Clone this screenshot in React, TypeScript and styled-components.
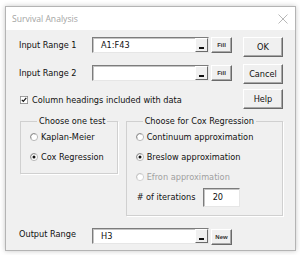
import React from "react";
import styled, { createGlobalStyle } from "styled-components";

const Global = createGlobalStyle`
  html, body { margin: 0; padding: 0; background: #ffffff; }
  #root { width: 300px; height: 255px; overflow: hidden; }
`;

const FONT = `"DejaVu Sans", "Liberation Sans", sans-serif`;

const Dialog = styled.div`
  margin: 6px 0 0 5px;
  width: 291px;
  height: 245px;
  box-sizing: border-box;
  border: 1px solid #b4b4b4;
  box-shadow: 0 0 5px rgba(0, 0, 0, 0.22);
  display: flex;
  flex-direction: column;
  background: #f0f0f0;
  font-family: ${FONT};
  font-size: 8.2px;
  color: #111;
`;

const TitleBar = styled.div`
  height: 23px;
  background: #ffffff;
  display: flex;
  align-items: center;
  justify-content: space-between;
  padding: 0 7px 0 6px;
  flex-shrink: 0;
`;

const Title = styled.span`
  font-family: "Open Sans", "Noto Sans", sans-serif;
  font-size: 8.6px;
  color: #a3a3a3;
`;

const Body = styled.div`
  flex: 1;
  display: flex;
  flex-direction: column;
  padding: 7px 12px 0 13px;
`;

const Row = styled.div<{ $mt?: number; $align?: string }>`
  display: flex;
  justify-content: space-between;
  align-items: ${(p) => p.$align || "flex-start"};
  margin-top: ${(p) => p.$mt || 0}px;
`;

const Left = styled.div<{ $mt?: number }>`
  display: flex;
  align-items: flex-start;
  margin-top: ${(p) => p.$mt || 0}px;
`;

const Label = styled.span<{ $w?: number; $lh?: number }>`
  width: ${(p) => p.$w || 73}px;
  line-height: ${(p) => p.$lh || 16}px;
  white-space: nowrap;
`;

const RefEdit = styled.div`
  width: 117px;
  height: 16px;
  box-sizing: border-box;
  background: #fff;
  border-style: solid;
  border-width: 1px;
  border-color: #7c7c7c #e6e6e6 #e6e6e6 #7c7c7c;
  box-shadow: inset 1px 1px 0 #c4c4c4;
  display: flex;
  align-items: stretch;
`;

const EditText = styled.span`
  flex: 1;
  padding-left: 8px;
  line-height: 14px;
`;

const CollapseBtn = styled.div`
  width: 13px;
  box-sizing: border-box;
  background: #f0f0f0;
  border-style: solid;
  border-width: 1px;
  border-color: #ffffff #6a6a6a #6a6a6a #ffffff;
  display: flex;
  align-items: flex-end;
  justify-content: center;
  padding-bottom: 2px;
  &::after {
    content: "";
    width: 5px;
    height: 2px;
    background: #111;
  }
`;

const SmallBtn = styled.div<{ $mt?: number }>`
  width: 21px;
  height: 16px;
  box-sizing: border-box;
  margin-left: 2px;
  margin-top: ${(p) => p.$mt || 0}px;
  background: #f0f0f0;
  border-style: solid;
  border-width: 1px;
  border-color: #ffffff #6a6a6a #6a6a6a #ffffff;
  box-shadow: inset -1px -1px 0 #a8a8a8;
  font-family: "Liberation Sans", sans-serif;
  font-size: 6px;
  font-weight: bold;
  display: flex;
  align-items: center;
  justify-content: center;
  color: #333;
`;

const Button = styled.div<{ $mt?: number }>`
  width: 40px;
  height: 20px;
  box-sizing: border-box;
  margin-top: ${(p) => p.$mt || 0}px;
  background: #f0f0f0;
  border-style: solid;
  border-width: 1px;
  border-color: #ffffff #6a6a6a #6a6a6a #ffffff;
  box-shadow: inset -1px -1px 0 #a8a8a8;
  display: flex;
  align-items: center;
  justify-content: center;
`;

const Check = styled.label`
  display: flex;
  align-items: center;
  gap: 4px;
  margin-left: 1px;
  margin-top: 2px;
`;

const Groups = styled.div`
  display: flex;
  align-items: flex-start;
  gap: 8px;
  margin-top: 7px;
  margin-left: 1px;
`;

const Group = styled.fieldset<{ $w: number; $h: number }>`
  margin: 0;
  width: ${(p) => p.$w}px;
  height: ${(p) => p.$h}px;
  box-sizing: border-box;
  padding: 0 0 0 9px;
  border: 1px solid #d0d0d0;
  box-shadow: 1px 1px 0 #fff;
  display: flex;
  flex-direction: column;
`;

const Legend = styled.legend`
  padding: 0 2px;
  margin-left: 7px;
  line-height: 11px;
`;

const OptRow = styled.div<{ $disabled?: boolean }>`
  height: 20px;
  display: flex;
  align-items: center;
  gap: 3px;
  white-space: nowrap;
  color: ${(p) => (p.$disabled ? "#a0a0a0" : "inherit")};
`;

const Iter = styled.div`
  height: 20px;
  display: flex;
  align-items: center;
  padding-left: 1px;
`;

const IterLabel = styled.span`
  width: 66px;
`;

const NumBox = styled.div`
  width: 37px;
  height: 19px;
  box-sizing: border-box;
  background: #fff;
  border-style: solid;
  border-width: 1px;
  border-color: #7c7c7c #e6e6e6 #e6e6e6 #7c7c7c;
  box-shadow: inset 1px 1px 0 #c4c4c4;
  padding-left: 9px;
  line-height: 17px;
`;

const Radio = ({ checked, disabled }: { checked?: boolean; disabled?: boolean }) => (
  <svg width="8" height="8" viewBox="0 0 8 8">
    <circle cx="4" cy="4" r="3.6" fill="#fff" stroke={disabled ? "#c8c8c8" : "#a8a8a8"} strokeWidth="0.8" />
    <path d="M1.2 5.6 A3.2 3.2 0 0 1 5.6 1.2" fill="none" stroke={disabled ? "#c0c0c0" : "#808080"} strokeWidth="0.8" />
    {checked && <circle cx="4" cy="4" r="1.5" fill="#111" />}
  </svg>
);

const CheckBox = () => (
  <svg width="8" height="8" viewBox="0 0 8 8">
    <rect x="0.4" y="0.4" width="7.2" height="7.2" fill="#fff" stroke="#8a8a8a" strokeWidth="0.8" />
    <path d="M1.8 3.8 L3.3 5.4 L6.3 1.9" fill="none" stroke="#111" strokeWidth="1.2" />
  </svg>
);

const CloseIcon = () => (
  <svg width="10" height="10" viewBox="0 0 10 10">
    <path d="M0.5 0.5 L9.5 9.5 M9.5 0.5 L0.5 9.5" stroke="#b0b0b0" strokeWidth="0.9" />
  </svg>
);

export default function App() {
  return (
    <>
      <Global />
      <Dialog>
        <TitleBar>
          <Title>Survival Analysis</Title>
          <CloseIcon />
        </TitleBar>
        <Body>
          <Row>
            <Left>
              <Label>Input Range 1</Label>
              <RefEdit>
                <EditText>A1:F43</EditText>
                <CollapseBtn />
              </RefEdit>
              <SmallBtn>Fill</SmallBtn>
            </Left>
            <Button>OK</Button>
          </Row>
          <Row $mt={7}>
            <Left $mt={1}>
              <Label>Input Range 2</Label>
              <RefEdit>
                <EditText />
                <CollapseBtn />
              </RefEdit>
              <SmallBtn>Fill</SmallBtn>
            </Left>
            <Button>Cancel</Button>
          </Row>
          <Row $mt={5} $align="center">
            <Check>
              <CheckBox />
              <span>Column headings included with data</span>
            </Check>
            <Button>Help</Button>
          </Row>
          <Groups>
            <Group $w={98} $h={58}>
              <Legend>Choose one test</Legend>
              <OptRow>
                <Radio />
                <span>Kaplan-Meier</span>
              </OptRow>
              <OptRow>
                <Radio checked />
                <span>Cox Regression</span>
              </OptRow>
            </Group>
            <Group $w={158} $h={100}>
              <Legend>Choose for Cox Regression</Legend>
              <OptRow>
                <Radio />
                <span>Continuum approximation</span>
              </OptRow>
              <OptRow>
                <Radio checked />
                <span>Breslow approximation</span>
              </OptRow>
              <OptRow $disabled>
                <Radio disabled />
                <span>Efron approximation</span>
              </OptRow>
              <Iter>
                <IterLabel># of iterations</IterLabel>
                <NumBox>20</NumBox>
              </Iter>
            </Group>
          </Groups>
          <Row $mt={12}>
            <Left>
              <Label $lh={12}>Output Range</Label>
              <RefEdit>
                <EditText>H3</EditText>
                <CollapseBtn />
              </RefEdit>
              <SmallBtn $mt={1}>New</SmallBtn>
            </Left>
          </Row>
        </Body>
      </Dialog>
    </>
  );
}
